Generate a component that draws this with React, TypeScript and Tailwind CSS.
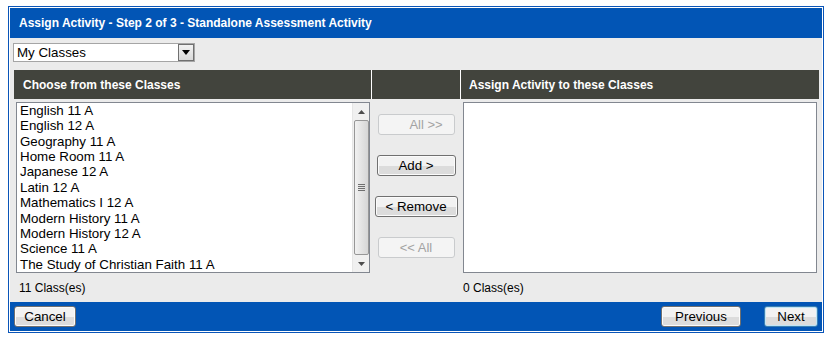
const classes = [
  'English 11 A',
  'English 12 A',
  'Geography 11 A',
  'Home Room 11 A',
  'Japanese 12 A',
  'Latin 12 A',
  'Mathematics I 12 A',
  'Modern History 11 A',
  'Modern History 12 A',
  'Science 11 A',
  'The Study of Christian Faith 11 A',
];

function WinButton({
  children,
  disabled,
  primary,
  className = '',
}: {
  children: React.ReactNode;
  disabled?: boolean;
  primary?: boolean;
  className?: string;
}) {
  if (disabled) {
    return (
      <button
        disabled
        className={`h-[21px] rounded-[3px] border border-[#c9cbcd] bg-[#f4f4f4] text-[13px] leading-none text-[#a3a3a3] ${className}`}
      >
        {children}
      </button>
    );
  }
  return (
    <button
      className={`h-[21px] rounded-[3px] border ${
        primary ? 'border-[#3c7fb1] shadow-[inset_0_0_0_1px_#bfe4f7]' : 'border-[#707070] shadow-[inset_0_0_0_1px_#fbfbfb]'
      } bg-gradient-to-b from-[#f2f2f2] from-50% to-[#dcdcdc] to-50% text-[13.33px] leading-none text-black ${className}`}
    >
      {children}
    </button>
  );
}

export default function App() {
  return (
    <div className="bg-white w-[829px] h-[343px] pt-[6px] pl-[8px] font-['Liberation_Sans',Arial,sans-serif]">
      <div className="w-[816px] border border-[#0a55b8] p-px">
        <div className="bg-[#ebebeb]">
          {/* Title */}
          <div className="h-[30px] bg-[#0255b5] flex items-center pl-[9px] text-white font-bold text-[12px]">
            Assign Activity - Step 2 of 3 - Standalone Assessment Activity
          </div>

          <div className="pl-[3px] pr-[3px] pt-[5px]">
            {/* Dropdown */}
            <div className="w-[182px] h-[19px] bg-white border border-[#a5a5a5] flex items-center">
              <span className="flex-1 pl-[3px] text-[13.33px] leading-none text-black">My Classes</span>
              <span className="w-[16px] h-[17px] border border-[#707070] bg-gradient-to-b from-[#f2f2f2] to-[#d9d9d9] flex items-center justify-center">
                <svg width="8" height="5" viewBox="0 0 8 5">
                  <path d="M0 0h8L4 5z" fill="#000" />
                </svg>
              </span>
            </div>

            {/* Column headers */}
            <div className="mt-[8px] ml-px flex gap-px bg-white w-[805px] h-[29px]">
              <div className="w-[357px] bg-[#42443d] text-white font-bold text-[12px] flex items-center pl-[9px]">
                Choose from these Classes
              </div>
              <div className="w-[88px] bg-[#42443d]" />
              <div className="w-[358px] bg-[#42443d] text-white font-bold text-[12px] flex items-center pl-[8px]">
                Assign Activity to these Classes
              </div>
            </div>

            {/* Lists */}
            <div className="ml-px flex w-[805px] pt-[3px]">
              <div className="w-[357px] pl-[2px]">
                <div className="w-[354px] h-[171px] bg-white border border-[#828790] flex">
                  <div className="flex-1 pl-[3px] text-[13.33px] leading-[15.36px] text-black">
                    {classes.map((c) => (
                      <div key={c}>{c}</div>
                    ))}
                  </div>
                  <div className="w-[17px] bg-[#f0f0f0] border-l border-[#e6e6e6] flex flex-col items-center">
                    <div className="h-[17px] flex items-center justify-center">
                      <svg width="7" height="4" viewBox="0 0 7 4">
                        <path d="M0 4L3.5 0L7 4z" fill="#4d4d4d" />
                      </svg>
                    </div>
                    <div className="w-[15px] flex-1 rounded-[2px] border border-[#979797] bg-gradient-to-r from-[#f1f1f1] to-[#d6d6d6] flex items-center justify-center">
                      <div className="flex flex-col gap-[1px]">
                        <div className="w-[7px] h-px bg-[#6f6f6f]" />
                        <div className="w-[7px] h-px bg-[#6f6f6f]" />
                        <div className="w-[7px] h-px bg-[#6f6f6f]" />
                        <div className="w-[7px] h-px bg-[#6f6f6f]" />
                      </div>
                    </div>
                    <div className="h-[17px] flex items-center justify-center">
                      <svg width="7" height="4" viewBox="0 0 7 4">
                        <path d="M0 0L3.5 4L7 0z" fill="#4d4d4d" />
                      </svg>
                    </div>
                  </div>
                </div>
              </div>

              <div className="w-[90px] flex flex-col items-center pt-[12px] gap-[20px]">
                <WinButton disabled className="w-[77px] pl-[20px]">All &gt;&gt;</WinButton>
                <WinButton className="w-[79px]">Add &gt;</WinButton>
                <WinButton className="w-[83px]">&lt; Remove</WinButton>
                <WinButton disabled className="w-[77px]">&lt;&lt; All</WinButton>
              </div>

              <div className="w-[358px] pl-[2px]">
                <div className="w-[354px] h-[171px] bg-white border border-[#828790]" />
              </div>
            </div>

            {/* Counts */}
            <div className="flex h-[29px] items-center text-[12px] text-black">
              <div className="w-[450px] pl-[6px]">11 Class(es)</div>
              <div>0 Class(es)</div>
            </div>
          </div>

          {/* Footer */}
          <div className="h-[29px] bg-[#0255b5] flex items-center px-[4px]">
            <WinButton className="w-[62px]">Cancel</WinButton>
            <div className="flex-1" />
            <WinButton className="w-[80px]">Previous</WinButton>
            <WinButton primary className="w-[54px] ml-[23px]">Next</WinButton>
          </div>
        </div>
      </div>
    </div>
  );
}
